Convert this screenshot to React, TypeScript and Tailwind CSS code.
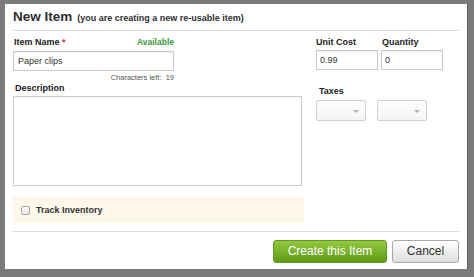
import React from 'react';

const font = { fontFamily: '"Liberation Sans", Arial, Helvetica, sans-serif' };

function TextBox({ value, className }: { value: string; className: string }) {
  return (
    <div
      className={`h-[20px] border border-[#c8c8c8] bg-white pl-[3px] text-[9px] leading-[18px] text-[#333] shadow-[inset_0_1px_1px_rgba(0,0,0,0.06)] ${className}`}
    >
      {value}
    </div>
  );
}

function SelectBox() {
  return (
    <div className="relative h-[21px] w-[50px] rounded-[2px] border border-[#cfcfcf] bg-gradient-to-b from-white to-[#f4f4f4]">
      <span className="absolute right-[6px] top-[9px] h-0 w-0 border-x-[3px] border-t-[3px] border-x-transparent border-t-[#b0b0b0]" />
    </div>
  );
}

export default function App() {
  return (
    <div className="h-[277px] w-[474px] overflow-hidden bg-[#7a7a7a] pl-[5px] pt-[4px]" style={font}>
      <div className="flex h-[265px] w-[463px] flex-col border-r border-[#5e5e5e] bg-white px-[8px]">
        {/* Header */}
        <div className="flex items-baseline border-b border-[#dcdcdc] pb-[4px] pt-[5px] text-[#2f2f2f]">
          <span className="text-[13.5px] font-bold leading-[16px]">New Item</span>
          <span className="ml-[5px] text-[9px] font-bold leading-[16px]">
            (you are creating a new re-usable item)
          </span>
        </div>

        {/* Body */}
        <div className="flex pt-[6px]">
          <div className="flex w-[291px] flex-col">
            <div className="flex w-[161px] flex-col">
              <div className="flex items-baseline justify-between text-[9px] font-bold leading-[11px]">
                <span className="pl-[1px] text-[#222]">
                  Item Name <span className="text-[#d0213a]">*</span>
                </span>
                <span className="text-[8.5px] text-[#3b9a3b]">Available</span>
              </div>
              <TextBox value="Paper clips" className="mt-[3px] w-[161px] pl-[4px]" />
              <div className="mt-[2px] text-right text-[7.5px] leading-[9px] text-[#555]">
                Characters left:&nbsp;&nbsp;19
              </div>
            </div>
            <div className="mt-[1px] pl-[2px] text-[9px] font-bold leading-[11px] text-[#222]">Description</div>
            <div className="mt-[2px] h-[90px] w-[289px] border border-[#cdcdcd] bg-white shadow-[inset_0_1px_1px_rgba(0,0,0,0.05)]" />
            <div className="mt-[11px] flex h-[26px] w-[291px] items-center bg-[#fdf8ea] pl-[8px]">
              <span className="h-[9px] w-[9px] rounded-[2px] border border-[#a9a9a9] bg-gradient-to-b from-white to-[#e6e6e6]" />
              <span className="ml-[6px] text-[9px] font-bold leading-[11px] text-[#333]">Track Inventory</span>
            </div>
          </div>

          <div className="ml-[12px] flex flex-col">
            <div className="flex gap-[3px]">
              <div className="flex flex-col">
                <span className="text-[9px] font-bold leading-[11px] text-[#222]">Unit Cost</span>
                <TextBox value="0.99" className="mt-[2px] w-[62px]" />
              </div>
              <div className="flex flex-col">
                <span className="pl-[1px] text-[9px] font-bold leading-[11px] text-[#222]">Quantity</span>
                <TextBox value="0" className="mt-[2px] w-[62px]" />
              </div>
            </div>
            <span className="mt-[16px] pl-[3px] text-[9px] font-bold leading-[11px] text-[#222]">Taxes</span>
            <div className="mt-[3px] flex gap-[11px]">
              <SelectBox />
              <SelectBox />
            </div>
          </div>
        </div>

        {/* Footer */}
        <div className="mt-[8px] flex justify-end gap-[5px] border-t border-[#dcdcdc] pt-[8px]">
          <button className="h-[23px] w-[114px] rounded-[3px] border border-[#5f9a1c] bg-gradient-to-b from-[#94c83e] to-[#5e9c18] text-[12px] leading-[21px] text-white">
            Create this Item
          </button>
          <button className="h-[23px] w-[67px] rounded-[3px] border border-[#a8a8a8] bg-gradient-to-b from-white to-[#dedede] text-[12px] leading-[21px] text-[#333]">
            Cancel
          </button>
        </div>
      </div>
    </div>
  );
}
